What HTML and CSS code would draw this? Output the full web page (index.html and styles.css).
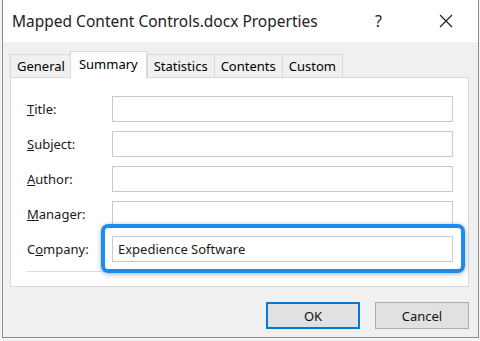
FILE: index.html
```html
<!DOCTYPE html>
<html lang="en">
<head>
  <meta charset="UTF-8" />
  <title>Mapped Content Controls.docx Properties</title>
  <link rel="stylesheet" href="styles.css">
</head>
<body>

  <div class="janela">
    <div class="barra-titulo">
      <span class="titulo">Mapped Content Controls.docx Properties</span>
      <span class="ajuda">?</span>
      <svg class="fechar" width="14" height="14" viewBox="0 0 14 14">
        <path d="M1 1 L13 13 M13 1 L1 13" stroke="#1a1a1a" stroke-width="1.1" fill="none"/>
      </svg>
    </div>

    <div class="corpo">
      <div class="abas">
        <span class="aba">General</span>
        <span class="aba ativa">Summary</span>
        <span class="aba">Statistics</span>
        <span class="aba">Contents</span>
        <span class="aba">Custom</span>
      </div>

      <div class="painel">
        <div class="linha">
          <label><u>T</u>itle:</label>
          <div class="campo"></div>
        </div>
        <div class="linha">
          <label><u>S</u>ubject:</label>
          <div class="campo"></div>
        </div>
        <div class="linha">
          <label><u>A</u>uthor:</label>
          <div class="campo"></div>
        </div>
        <div class="linha">
          <label><u>M</u>anager:</label>
          <div class="campo"></div>
        </div>
        <div class="linha">
          <label>C<u>o</u>mpany:</label>
          <div class="campo destaque">Expedience Software</div>
        </div>
        <div class="separador"></div>
      </div>

      <div class="botoes">
        <button class="botao padrao">OK</button>
        <button class="botao">Cancel</button>
      </div>
    </div>
  </div>

</body>
</html>
```

FILE: styles.css
```css
body {
  margin: 0;
  background-color: #f4f4f4;
  font-family: "Noto Sans", "Open Sans", sans-serif;
  color: #000;
}

.janela {
  margin-left: 2px;
  width: 475px;
  height: 337px;
  border: 1px solid #8c8c8c;
  border-top: none;
  background-color: #f0f0f0;
  display: flex;
  flex-direction: column;
}

.barra-titulo {
  height: 42px;
  background-color: white;
  display: flex;
  align-items: center;
  padding-left: 9px;
}

.titulo {
  font-size: 15.5px;
  color: #222;
  flex: 1;
}

.ajuda {
  font-size: 16px;
  color: #222;
  margin-right: 57px;
}

.fechar {
  margin-right: 25px;
}

.corpo {
  padding: 8px 9px 0 7px;
}

.abas {
  display: flex;
  align-items: flex-end;
  height: 27px;
}

.aba {
  height: 22px;
  line-height: 22px;
  padding: 0 6px;
  font-size: 13px;
  border: 1px solid #d9d9d9;
  border-bottom: none;
  margin-right: -1px;
  background-color: #f0f0f0;
}

.aba.ativa {
  height: 26px;
  line-height: 24px;
  padding: 0 8px;
  background-color: white;
  position: relative;
  z-index: 1;
  margin-bottom: -1px;
  margin-left: -1px;
  margin-right: 0;
}

.painel {
  width: 459px;
  height: 210px;
  background-color: white;
  border: 1px solid #d9d9d9;
  padding: 18px 15px 0 16px;
  box-sizing: border-box;
}

.linha {
  display: flex;
  align-items: center;
  margin-bottom: 9px;
}

.linha label {
  width: 85px;
  font-size: 13px;
  color: #1a1a1a;
}

.campo {
  flex: 1;
  height: 26px;
  border: 1px solid #c8c8cc;
  box-sizing: border-box;
  font-size: 13px;
  line-height: 24px;
  padding-left: 5px;
  color: #1a1a1a;
}

.destaque {
  position: relative;
}

.destaque::after {
  content: "";
  position: absolute;
  left: -12px;
  right: -13px;
  top: -13px;
  bottom: -12px;
  border: 4px solid #1a8cf0;
  border-radius: 7px;
  box-shadow: 0 1px 5px rgba(0, 60, 140, 0.4);
}

.separador {
  border-top: 1px solid #dcdcdc;
  margin-top: 4px;
}

.botoes {
  display: flex;
  justify-content: flex-end;
  gap: 15px;
  margin-top: 15px;
}

.botao {
  width: 94px;
  height: 27px;
  font-family: "Noto Sans", sans-serif;
  font-size: 13px;
  background-color: #e1e1e1;
  border: 1px solid #adadad;
  color: #111;
}

.botao.padrao {
  border: 2px solid #0078d7;
}
```
